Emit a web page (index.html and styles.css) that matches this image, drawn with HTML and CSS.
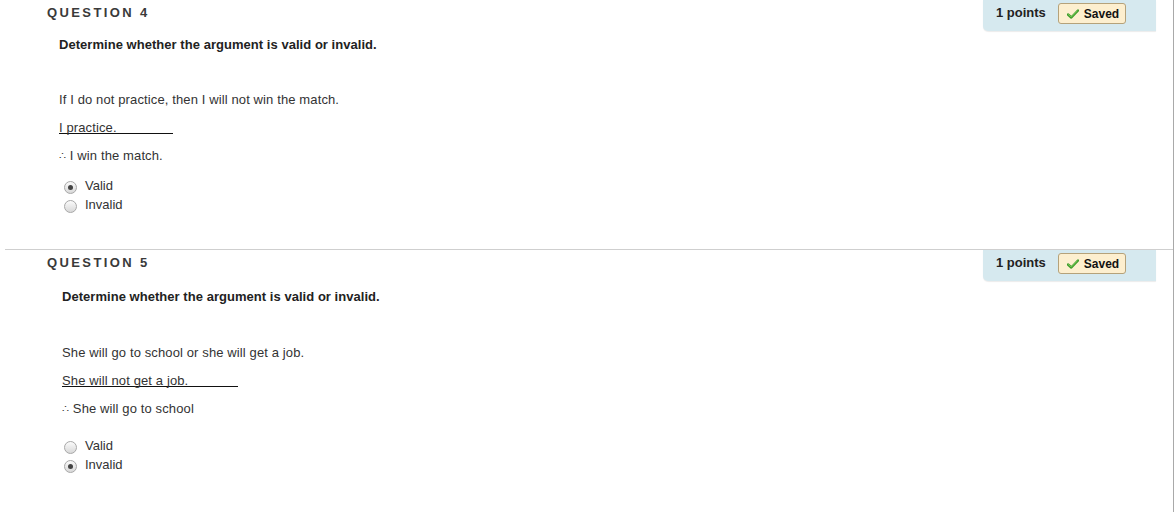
FILE: index.html
```html
<!DOCTYPE html>
<html>
<head>
<meta charset="utf-8">
<link rel="stylesheet" href="styles.css">
</head>
<body>
<div class="page">
  <div class="question q4">
    <div class="q-head">
      <h3 class="q-title">QUESTION 4</h3>
      <div class="points">
        <span class="pts">1 points</span>
        <span class="saved"><svg class="check" viewBox="0 0 12 10" width="12" height="10"><path d="M1 5.5 L4.3 8.5 L11 1.5" fill="none" stroke="#3c9a2a" stroke-width="2.4" stroke-linecap="round" stroke-linejoin="round"/><path d="M1.5 5.6 L4.3 8 L10.4 1.8" fill="none" stroke="#7fd35a" stroke-width="0.9" stroke-linecap="round"/></svg>Saved</span>
      </div>
    </div>
    <div class="q-body">
      <p class="prompt">Determine whether the argument is valid or invalid.</p>
      <p class="line first">If I do not practice, then I will not win the match.</p>
      <p class="line"><span class="premise w1">I practice.</span></p>
      <p class="line"><span class="therefore">∴</span> I win the match.</p>
      <ul class="choices">
        <li><span class="radio on"></span>Valid</li>
        <li><span class="radio"></span>Invalid</li>
      </ul>
    </div>
  </div>
  <div class="question q5">
    <div class="q-head">
      <h3 class="q-title">QUESTION 5</h3>
      <div class="points">
        <span class="pts">1 points</span>
        <span class="saved"><svg class="check" viewBox="0 0 12 10" width="12" height="10"><path d="M1 5.5 L4.3 8.5 L11 1.5" fill="none" stroke="#3c9a2a" stroke-width="2.4" stroke-linecap="round" stroke-linejoin="round"/><path d="M1.5 5.6 L4.3 8 L10.4 1.8" fill="none" stroke="#7fd35a" stroke-width="0.9" stroke-linecap="round"/></svg>Saved</span>
      </div>
    </div>
    <div class="q-body">
      <p class="prompt">Determine whether the argument is valid or invalid.</p>
      <p class="line first">She will go to school or she will get a job.</p>
      <p class="line"><span class="premise w2">She will not get a job.</span></p>
      <p class="line"><span class="therefore">∴</span> She will go to school</p>
      <ul class="choices">
        <li><span class="radio"></span>Valid</li>
        <li><span class="radio on"></span>Invalid</li>
      </ul>
    </div>
  </div>
</div>
</body>
</html>
```
FILE: styles.css
```css
html, body {
  margin: 0;
  padding: 0;
  background: #fff;
}
body {
  font-family: "Liberation Sans", Arial, sans-serif;
  font-size: 13px;
  color: #333;
}
.page {
  width: 1173px;
  min-height: 512px;
  border-right: 1px solid #a9a9a9;
}
.question {
  display: flex;
  flex-direction: column;
}
.q4 {
  padding-bottom: 35px;
}
.q5 {
  margin-left: 5px;
  border-top: 1px solid #cfcfcf;
}
.q-head {
  display: flex;
  justify-content: space-between;
  align-items: flex-start;
  height: 31px;
}
.q-title {
  margin: 0;
  padding-left: 47px;
  font-size: 13px;
  line-height: 26px;
  font-weight: bold;
  letter-spacing: 2.4px;
  color: #3a3a3a;
}
.q5 .q-title {
  padding-left: 42px;
}
.points {
  display: flex;
  align-items: center;
  width: 173px;
  height: 31px;
  box-sizing: border-box;
  padding-left: 13px;
  margin-right: 17px;
  background: #d6e9ef;
  border-bottom-left-radius: 5px;
  box-shadow: 0 1px 1px rgba(0,0,0,0.08);
}
.pts {
  font-weight: bold;
  color: #222;
  margin-right: 12px;
  position: relative;
  top: -3px;
}
.saved {
  display: flex;
  align-items: center;
  height: 21px;
  width: 68px;
  box-sizing: border-box;
  padding-left: 8px;
  margin-top: -4px;
  background: #fdefcf;
  border: 1px solid #b5a27a;
  border-radius: 3px;
  font-weight: bold;
  font-size: 12px;
  color: #111;
}
.check {
  margin-right: 5px;
}
.q-body {
  padding-left: 59px;
}
.q5 .q-body {
  padding-left: 57px;
}
p {
  margin: 0;
}
.prompt {
  font-weight: bold;
  color: #222;
  line-height: 18px;
  margin-top: 5px;
  letter-spacing: 0.04px;
}
.q5 .prompt {
  margin-top: 7px;
}
.line {
  line-height: 18px;
  margin-top: 10px;
  letter-spacing: 0.12px;
}
.line.first {
  margin-top: 37px;
}
.q5 .line.first {
  margin-top: 38px;
}
.therefore {
  font-size: 11px;
}
.premise {
  display: inline-block;
  height: 18px;
  background: linear-gradient(#111, #111) no-repeat left 0 top 14px / 100% 1px;
}
.w1 { width: 114px; }
.w2 { width: 176px; }
.choices {
  list-style: none;
  margin: 11px 0 0 5px;
  padding: 0;
}
.q5 .choices {
  margin-top: 18px;
  margin-left: 2px;
}
.choices li {
  display: flex;
  align-items: center;
  height: 19px;
  line-height: 19px;
}
.radio {
  width: 11px;
  height: 11px;
  border-radius: 50%;
  border: 1px solid #a8a8a8;
  background: linear-gradient(#fbfbfb, #d8d8d8);
  margin-right: 8px;
  position: relative;
  top: 2px;
  box-sizing: content-box;
}
.radio.on::after {
  content: "";
  position: absolute;
  left: 3px;
  top: 3px;
  width: 5px;
  height: 5px;
  border-radius: 50%;
  background: #444;
}
```
